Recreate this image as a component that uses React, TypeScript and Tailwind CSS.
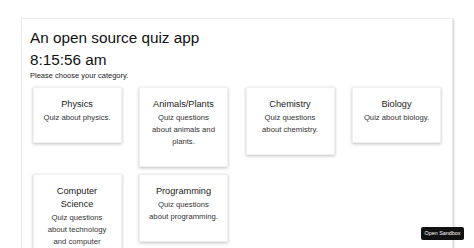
const categories = [
  { name: "Physics", desc: "Quiz about physics." },
  { name: "Animals/Plants", desc: "Quiz questions about animals and plants." },
  { name: "Chemistry", desc: "Quiz questions about chemistry." },
  { name: "Biology", desc: "Quiz about biology." },
  { name: "Computer Science", desc: "Quiz questions about technology and computer science." },
  { name: "Programming", desc: "Quiz questions about programming." },
];

export default function App() {
  return (
    <div className="min-h-screen bg-white pt-[18px] pl-[21px] font-['Liberation_Sans',Arial,sans-serif]">
      <div className="w-[432px] min-h-[260px] bg-white border border-[#ececec] shadow-[1px_1px_2px_rgba(0,0,0,0.2)] pt-[8px]">
        <div className="pl-[8px] text-[#111]">
          <h1 className="text-[15.3px] leading-[22px] font-normal">An open source quiz app</h1>
          <h2 className="text-[15.3px] leading-[22px] font-normal">8:15:56 am</h2>
          <p className="text-[7.5px] leading-[10px] text-[#222]">Please choose your category.</p>
        </div>
        <div className="mt-[6px] pl-[10.5px] flex flex-wrap items-start gap-x-[17.5px] gap-y-[7px]">
          {categories.map((c) => (
            <div
              key={c.name}
              className="w-[89px] bg-white border border-[#f0f0f0] shadow-[0_1px_3px_rgba(0,0,0,0.25)] px-[8px] pt-[10px] pb-[18px] text-center"
            >
              <div className="text-[9.2px] leading-[13px] text-[#222]">{c.name}</div>
              <div className="mt-[1px] text-[7.7px] leading-[12px] text-[#333]">{c.desc}</div>
            </div>
          ))}
        </div>
      </div>
      <button className="fixed left-[421px] top-[227px] w-[43px] h-[13px] rounded-[2px] bg-[#111] text-white text-[5.4px] leading-[13px] text-center">
        Open Sandbox
      </button>
    </div>
  );
}
